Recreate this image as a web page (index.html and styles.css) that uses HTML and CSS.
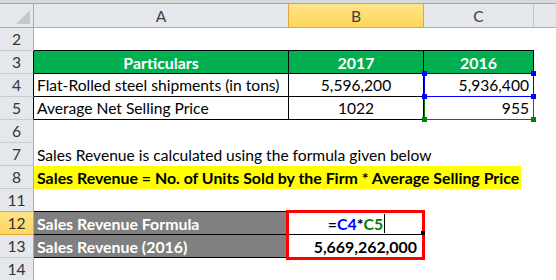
FILE: index.html
```html
<!DOCTYPE html>
<html>
<head>
<meta charset="utf-8">
<link rel="stylesheet" href="styles.css">
</head>
<body>
<div class="sheet">
  <div class="strip"></div>

  <div class="h corner"></div>
  <div class="h">A</div>
  <div class="h hsel">B</div>
  <div class="h">C</div>
  <div class="h hlast"></div>

  <div class="r">2</div>
  <div class="c tb"></div><div class="c tb"></div><div class="c tb"></div><div class="c"></div>

  <div class="r edge">3</div>
  <div class="c t green">Particulars</div>
  <div class="c t green">2017</div>
  <div class="c t green">2016</div>
  <div class="c"></div>

  <div class="r edge">4</div>
  <div class="c t">Flat-Rolled steel shipments (in tons)</div>
  <div class="c t center">5,596,200</div>
  <div class="c t right">5,936,400</div>
  <div class="c"></div>

  <div class="r edge">5</div>
  <div class="c t">Average Net Selling Price</div>
  <div class="c t center">1022</div>
  <div class="c t right">955</div>
  <div class="c"></div>

  <div class="r">6</div>
  <div class="c span"></div>

  <div class="r">7</div>
  <div class="c span">Sales Revenue is calculated using the formula given below</div>

  <div class="r">8</div>
  <div class="c span nopad"><span class="hl">Sales Revenue = No. of Units Sold by the Firm * Average Selling Price</span></div>

  <div class="r">11</div>
  <div class="c tb"></div><div class="c"></div><div class="c"></div><div class="c"></div>

  <div class="redbox">
    <div class="fx"><span class="k">=</span><span class="blue">C4</span><span class="k">*</span><span class="grn">C5</span><span class="cursor"></span></div>
    <div class="val">5,669,262,000</div>
    <div class="handle"></div>
  </div>

  <div class="r rsel">12</div>
  <div class="c gray">Sales Revenue Formula</div>
  <div class="c"></div><div class="c"></div>

  <div class="r">13</div>
  <div class="c gray">Sales Revenue (2016)</div>
  <div class="c"></div><div class="c"></div>

  <div class="r">14</div>
  <div class="c span"></div>

  <div class="selc5"></div>
  <div class="selc4"></div>
  <i class="sq b" style="left:422px;top:71px"></i>
  <i class="sq b" style="left:531px;top:71px"></i>
  <i class="sq b" style="left:422px;top:94px"></i>
  <i class="sq b" style="left:531px;top:94px"></i>
  <i class="sq g" style="left:422px;top:117px"></i>
  <i class="sq g" style="left:531px;top:117px"></i>
</div>
</body>
</html>
```

FILE: styles.css
```css
html, body {
  margin: 0;
  padding: 0;
  background: #ffffff;
  overflow: hidden;
}

.sheet {
  position: relative;
  width: 556px;
  height: 280px;
  display: grid;
  grid-template-columns: 34px 255px 135px 110px 22px;
  grid-template-rows: 4px 24px repeat(11, 23px);
  font-family: Lato, "Liberation Sans", sans-serif;
  font-size: 15.6px;
  color: #000;
}

.strip {
  grid-column: 1 / -1;
  background: #d8d9db;
  border-bottom: 1px solid #a3a6aa;
}

.h {
  box-sizing: border-box;
  background: #e4e7eb;
  border-right: 1px solid #c3c7cd;
  border-bottom: 1px solid #a9adb3;
  display: flex;
  align-items: center;
  justify-content: center;
  color: #404040;
  font-size: 15.6px;
}

.hlast { border-right: none; }

.corner {
  position: relative;
  border-right: 1px solid #a9adb3;
}
.corner::after {
  content: "";
  position: absolute;
  right: 3px;
  bottom: 3px;
  width: 14px;
  height: 14px;
  background: #c4c7cc;
  clip-path: polygon(100% 0, 100% 100%, 0 100%);
}

.hsel {
  background: linear-gradient(#ffe488, #ffd65c);
  border-left: 1px solid #e3a641;
  border-right: 1px solid #e3a641;
  border-bottom: 1px solid #e3a641;
  margin-left: -1px;
  color: #404040;
}

.r {
  box-sizing: border-box;
  background: #e4e7eb;
  border-right: 1px solid #a9adb3;
  border-bottom: 1px solid #c7cbd1;
  display: flex;
  align-items: center;
  justify-content: center;
  color: #333;
  font-size: 15.6px;
}
.r.edge { border-right-color: #000; }

.rsel {
  background: linear-gradient(#ffe488, #ffd65c);
  border-right: 1px solid #e3a641;
  border-bottom: 1px solid #e3a641;
  border-top: 1px solid #e3a641;
  margin-top: -1px;
}

.c {
  box-sizing: border-box;
  display: flex;
  align-items: center;
  padding: 0 3px;
  white-space: nowrap;
  min-width: 0;
}

.span { grid-column: 2 / -1; }
.nopad { padding: 0; }

.tb { border-bottom: 1px solid #000; }

.t {
  border-right: 1px solid #000;
  border-bottom: 1px solid #000;
}

.green {
  background: #00b050;
  color: #ffffff;
  font-weight: 700;
  font-size: 15.9px;
  justify-content: center;
}

.center { justify-content: center; }
.right { justify-content: flex-end; padding-right: 4px; }

.hl {
  display: flex;
  align-items: center;
  height: 100%;
  background: #ffff00;
  font-weight: 700;
  font-size: 15.9px;
  padding: 0 2px 0 3px;
}

.gray {
  background: #808080;
  color: #ffffff;
  font-weight: 700;
  font-size: 15.9px;
  border-bottom: 1px solid #000;
}

.redbox {
  grid-column: 3;
  grid-row: 11 / span 2;
  margin: -2px -1px -2px -3px;
  border: 3px solid #ff0000;
  background: #ffffff;
  display: flex;
  flex-direction: column;
  position: relative;
  z-index: 2;
  font-weight: 700;
  font-size: 15.9px;
}

.fx {
  height: 22px;
  box-sizing: border-box;
  border-bottom: 1px solid #000;
  margin-right: 1px;
  display: flex;
  align-items: center;
  justify-content: center;
  padding-left: 3px;
}

.k { color: #000; }
.blue { color: #0000ff; }
.grn { color: #008000; }

.cursor {
  display: inline-block;
  width: 1px;
  height: 19px;
  background: #000;
  margin-left: 1px;
}

.val {
  flex: 1;
  display: flex;
  align-items: center;
  justify-content: flex-end;
  padding-right: 5px;
}

.handle {
  position: absolute;
  right: -3px;
  top: 18px;
  width: 4px;
  height: 4px;
  background: #000;
}

.selc4 {
  position: absolute;
  left: 424px;
  top: 73px;
  width: 110px;
  height: 24px;
  box-sizing: border-box;
  border: 1px solid #0000ff;
  z-index: 3;
}

.selc5 {
  position: absolute;
  left: 424px;
  top: 96px;
  width: 110px;
  height: 24px;
  box-sizing: border-box;
  border: 1px solid #008000;
  z-index: 3;
}

.sq {
  position: absolute;
  width: 5px;
  height: 5px;
  z-index: 4;
}
.sq.b { background: #0000ff; }
.sq.g { background: #008000; }
```
